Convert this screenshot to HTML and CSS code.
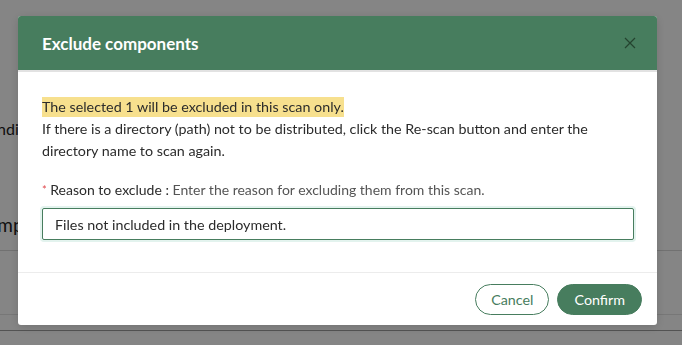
FILE: index.html
```html
<!DOCTYPE html>
<html lang="en">
<head>
    <meta charset="UTF-8">
    <meta name="viewport" content="width=device-width, initial-scale=1.0">
    <title>Exclude components</title>
    <link rel="stylesheet" href="styles.css">
</head>
<body>
    <div class="page">
        <div class="page-row">
            <span class="page-label">Standing</span>
        </div>
        <div class="page-row page-row-tall">
            <span class="page-title">Components</span>
        </div>
        <div class="page-line"></div>
        <div class="page-line page-line-light"></div>
        <div class="page-line page-line-dark"></div>
    </div>

    <div class="overlay"></div>

    <div class="modal" role="dialog" aria-labelledby="modalTitle">
        <div class="modal-header">
            <h2 id="modalTitle">Exclude components</h2>
            <button type="button" class="modal-close" aria-label="Close">
                <svg width="12" height="12" viewBox="0 0 12 12">
                    <path d="M1 1L11 11M11 1L1 11" stroke="currentColor" stroke-width="1.2" fill="none"/>
                </svg>
            </button>
        </div>

        <div class="modal-body">
            <p class="notice">
                <mark>The selected 1 will be excluded in this scan only.</mark><br>
                If there is a directory (path) not to be distributed, click the Re-scan button and enter the directory name to scan again.
            </p>

            <label class="field-label" for="reason">
                <span class="required">*</span> Reason to exclude : <span class="hint">Enter the reason for excluding them from this scan.</span>
            </label>
            <input type="text" id="reason" class="field-input" value="Files not included in the deployment.">
        </div>

        <div class="modal-footer">
            <button type="button" class="btn btn-outline">Cancel</button>
            <button type="button" class="btn btn-primary">Confirm</button>
        </div>
    </div>
</body>
</html>
```

FILE: styles.css
```css
:root {
  --primary-color: #477d5e;
  --primary-dark: #24432f;
  --text-color: #2b2b2b;
  --border-color: #ececec;
  --highlight: #f7e08e;
}

body {
  font-family: 'Lato', 'Noto Sans', sans-serif;
  color: var(--text-color);
  margin: 0;
  padding: 0;
  background-color: white;
  overflow: hidden;
}

/* page behind the dialog */
.page {
  height: 345px;
  padding-top: 118px;
  box-sizing: border-box;
}

.page-row {
  height: 22px;
  margin-left: -25px;
  line-height: 22px;
  white-space: nowrap;
}

.page-label {
  font-size: 16px;
  color: #222;
}

.page-row-tall {
  height: 110px;
  padding-top: 74px;
  box-sizing: border-box;
  margin-left: -26px;
}

.page-title {
  font-size: 19px;
  color: #222;
}

.page-line {
  height: 1px;
  background-color: #d8d8d8;
  margin-bottom: 63px;
}

.page-line-light {
  background-color: #e4e4e4;
  margin-bottom: 15px;
}

.page-line-dark {
  background-color: #a0a0a0;
}

.overlay {
  position: fixed;
  inset: 0;
  background-color: rgba(0, 0, 0, 0.48);
}

/* dialog */
.modal {
  position: fixed;
  top: 16px;
  left: 18px;
  width: 639px;
  background-color: white;
  border-radius: 3px;
  overflow: hidden;
  box-shadow: 0 2px 10px rgba(0, 0, 0, 0.15);
}

.modal-header {
  display: flex;
  align-items: center;
  justify-content: space-between;
  height: 54px;
  padding: 0 21px 0 24px;
  background-color: var(--primary-color);
  border-bottom: 2px solid #e2e2e2;
}

.modal-header h2 {
  margin: 0;
  font-size: 17px;
  font-weight: 700;
  color: white;
}

.modal-close {
  background: none;
  border: none;
  padding: 0;
  color: var(--primary-dark);
  cursor: pointer;
  display: flex;
}

.modal-body {
  padding: 24px 23px 32px 24px;
}

.notice {
  margin: 0 0 18px;
  font-size: 14.3px;
  line-height: 22px;
}

.notice mark {
  background-color: var(--highlight);
  color: var(--text-color);
  padding: 1px 0 2px;
}

.field-label {
  display: block;
  font-size: 14px;
  line-height: 20px;
  margin-bottom: 8px;
}

.required {
  color: #e0474c;
  font-size: 11px;
  vertical-align: top;
}

.hint {
  color: #555;
}

.field-input {
  width: 100%;
  box-sizing: border-box;
  height: 32px;
  padding: 0 12px;
  font-family: inherit;
  font-size: 14.3px;
  color: var(--text-color);
  border: 1px solid var(--primary-color);
  border-radius: 2px;
  box-shadow: 0 0 0 2px #e3f3ee;
  outline: none;
}

.modal-footer {
  display: flex;
  justify-content: flex-end;
  gap: 8px;
  padding: 11px 15px 10px;
  border-top: 1px solid var(--border-color);
}

.btn {
  height: 31px;
  padding: 0 15px;
  border-radius: 16px;
  font-family: inherit;
  font-size: 14.3px;
  cursor: pointer;
}

.btn-outline {
  background-color: white;
  border: 1px solid var(--primary-color);
  color: var(--primary-color);
}

.btn-primary {
  background-color: var(--primary-color);
  border: 1px solid var(--primary-color);
  color: white;
  padding: 0 16px;
}
```
